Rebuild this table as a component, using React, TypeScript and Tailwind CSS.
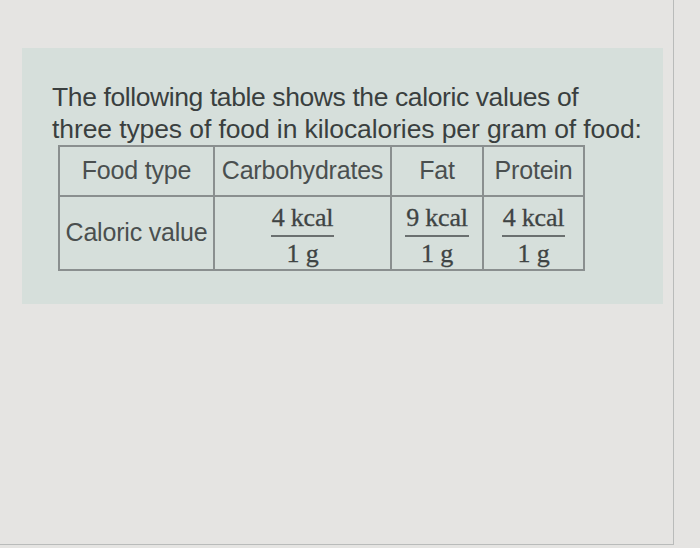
import React from 'react'

type Frac = { num: string; den: string }

const FOODS: { name: string; value: Frac }[] = [
  { name: 'Carbohydrates', value: { num: '4 kcal', den: '1 g' } },
  { name: 'Fat', value: { num: '9 kcal', den: '1 g' } },
  { name: 'Protein', value: { num: '4 kcal', den: '1 g' } },
]

function Fraction({ num, den }: Frac) {
  return (
    <span className="inline-flex flex-col items-center font-['Liberation_Serif',serif] text-[26px] leading-none text-[#3f4444] [-webkit-text-stroke:0.3px_#3f4444]">
      <span className="px-[1px] pb-[4px]">{num}</span>
      <span className="h-[2px] w-full bg-[#6b7070]" />
      <span className="pt-[4px]">{den}</span>
    </span>
  )
}

export default function App() {
  return (
    <div className="h-[548px] w-[700px] overflow-hidden bg-[#e5e4e2] font-['Liberation_Sans',Arial,sans-serif]">
      <div className="flex h-[545px] w-[674px] border-r border-b border-[#b9bbba]">
        <div className="mt-[48px] ml-[22px] h-[256px] w-[641px] bg-[#d6dfdb] pl-[30px] pt-[33px]">
          {/* Question text */}
          <p className="whitespace-nowrap text-[26.5px] leading-[32px] tracking-[-0.4px] text-[#3a3f3f]">
            The following table shows the caloric values of
            <br />
            <span className="tracking-[-0.1px]">three types of food in kilocalories per gram of food:</span>
          </p>

          <table className="ml-[6px] border-collapse border-2 border-[#7d8282] text-[25px] tracking-[-0.2px] text-[#4a4f4f]">
            <thead>
              <tr className="h-[50px]">
                <th className="w-[155px] border-2 border-[#8a8f8f] text-center font-normal">Food type</th>
                {FOODS.map((f) => (
                  <th
                    key={f.name}
                    className={`border-2 border-[#8a8f8f] text-center font-normal ${
                      f.name === 'Carbohydrates' ? 'w-[177px]' : f.name === 'Fat' ? 'w-[92px]' : 'w-[101px]'
                    }`}
                  >
                    {f.name}
                  </th>
                ))}
              </tr>
            </thead>
            <tbody>
              <tr className="h-[74px]">
                <td className="border-2 border-[#8a8f8f] text-center">Caloric value</td>
                {FOODS.map((f) => (
                  <td key={f.name} className="border-2 border-[#8a8f8f] text-center">
                    <Fraction num={f.value.num} den={f.value.den} />
                  </td>
                ))}
              </tr>
            </tbody>
          </table>
        </div>
      </div>
    </div>
  )
}
